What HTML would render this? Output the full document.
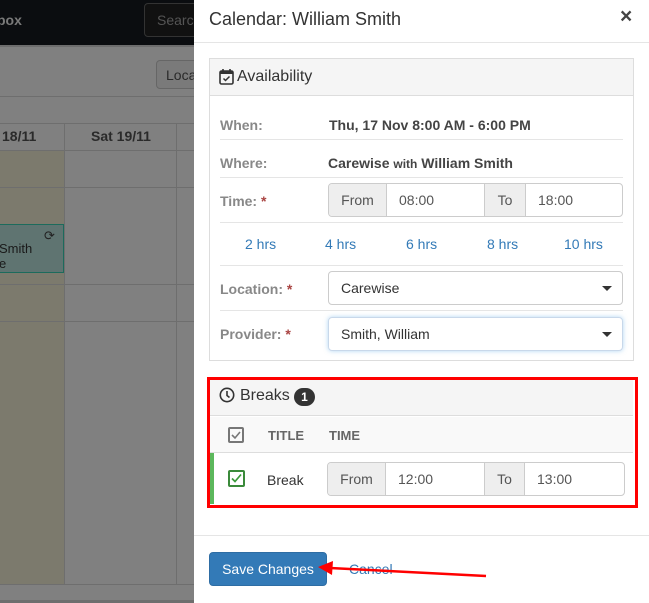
<!DOCTYPE html>
<html><head><meta charset="utf-8"><style>
*{box-sizing:border-box;margin:0;padding:0}
body{width:649px;height:603px;overflow:hidden;position:relative;font-family:"Liberation Sans",Arial,sans-serif;font-size:14px;color:#333;background:#808080}
.a{position:absolute}
.lbl{position:absolute;left:220px;font-weight:bold;color:#888;font-size:14px}
.lbl b{color:#a94442}
.hl{position:absolute;left:220px;width:403px;height:1px;background:#e5e5e5}
.ig{position:absolute;display:flex;border:1px solid #ccc;border-radius:4px;overflow:hidden;height:34px}
.ig div{display:flex;align-items:center;padding-left:12px;font-size:14px}
.ad{background:#eee;color:#555;border-right:1px solid #ccc;justify-content:center;padding-left:0!important}
.ip{border-right:1px solid #ccc;color:#555}
.sel{position:absolute;left:328px;width:295px;height:34px;border:1px solid #ccc;border-radius:4px;padding:8px 12px;font-size:14px;color:#333}
.sel:after{content:"";position:absolute;right:10px;top:14px;border:5px solid transparent;border-top:5px solid #333;border-bottom:0}
.hr{position:absolute;top:236px;color:#337ab7;font-size:14px}
</style></head><body>
<div class="a" style="left:0;top:0;width:194px;height:45px;background:#0b0d10"></div>
<div class="a" style="left:-3px;top:12px;color:#7a7a7a;font-weight:bold;font-size:14px">box</div>
<div class="a" style="left:144px;top:3px;width:60px;height:34px;border:1px solid #333;border-radius:4px;background:#111;color:#555;padding:8px 12px">Search</div>
<div class="a" style="left:0;top:45px;width:194px;height:2px;background:#6d6d6d"></div>
<div class="a" style="left:156px;top:60px;width:50px;height:29px;border:1px solid #666;border-radius:4px;background:#7a7a7a;color:#2a2a2a;padding:6px 9px">Loca</div>
<div class="a" style="left:0;top:96px;width:194px;height:1px;background:#6e6e6e"></div>
<div class="a" style="left:0;top:150px;width:64px;height:434px;background:#7c7a6d"></div>
<div class="a" style="left:0;top:123px;width:194px;height:1px;background:#6e6e6e"></div>
<div class="a" style="left:0;top:150px;width:194px;height:1px;background:#6e6e6e"></div>
<div class="a" style="left:0;top:187px;width:194px;height:1px;background:#6e6e6e"></div>
<div class="a" style="left:0;top:284px;width:194px;height:1px;background:#6e6e6e"></div>
<div class="a" style="left:0;top:321px;width:194px;height:1px;background:#6e6e6e"></div>
<div class="a" style="left:0;top:584px;width:194px;height:1px;background:#6e6e6e"></div>
<div class="a" style="left:0;top:600px;width:194px;height:3px;background:#6e6e6e"></div>
<div class="a" style="left:64px;top:123px;width:1px;height:461px;background:#6e6e6e"></div>
<div class="a" style="left:176px;top:123px;width:1px;height:461px;background:#6e6e6e"></div>
<div class="a" style="left:2px;top:128px;font-weight:bold;color:#2a2a2a">18/11</div>
<div class="a" style="left:91px;top:128px;font-weight:bold;color:#2a2a2a">Sat 19/11</div>
<div class="a" style="left:0;top:224px;width:64px;height:49px;background:#5f7471;border:1px solid #1c6b5c;border-left:0"></div>
<div class="a" style="left:-1px;top:241px;color:#1a1a1a;font-size:13px;line-height:15px">Smith<br>e</div>
<div class="a" style="left:44px;top:228px;color:#222;font-size:13px">⟳</div>
<div class="a" style="left:194px;top:0;width:455px;height:603px;background:#fff"></div>
<div class="a" style="left:209px;top:9px;font-size:18px;color:#333">Calendar: William Smith</div>
<div class="a" style="left:620px;top:5px;font-size:21px;font-weight:bold;color:#444">×</div>
<div class="a" style="left:194px;top:42px;width:455px;height:1px;background:#e5e5e5"></div>
<div class="a" style="left:209px;top:58px;width:425px;height:303px;border:1px solid #ddd"></div>
<div class="a" style="left:210px;top:59px;width:423px;height:37px;background:#f5f5f5;border-bottom:1px solid #ddd"></div>
<svg class="a" style="left:219px;top:68px" width="15" height="17" viewBox="0 0 15 17"><rect x="1" y="3" width="13" height="13" rx="1.5" fill="none" stroke="#333" stroke-width="1.6"/><rect x="1" y="3" width="13" height="3" fill="#333"/><line x1="4" y1="1" x2="4" y2="4" stroke="#333" stroke-width="1.6"/><line x1="11" y1="1" x2="11" y2="4" stroke="#333" stroke-width="1.6"/><path d="M4.5 10.5l2 2 4-4" fill="none" stroke="#333" stroke-width="1.5"/></svg>
<div class="a" style="left:237px;top:68px;font-size:16px">Availability</div>
<div class="lbl" style="top:117px">When:</div>
<div class="a" style="left:329px;top:117px;font-weight:bold;color:#444">Thu, 17 Nov 8:00 AM - 6:00 PM</div>
<div class="hl" style="top:139px"></div>
<div class="lbl" style="top:155px">Where:</div>
<div class="a" style="left:328px;top:155px;font-weight:bold;color:#444">Carewise <span style="font-size:12px">with</span> William Smith</div>
<div class="hl" style="top:177px"></div>
<div class="lbl" style="top:193px">Time: <b>*</b></div>
<div class="ig" style="left:328px;top:183px;width:295px"><div class="ad" style="width:58px">From</div><div class="ip" style="width:98px">08:00</div><div class="ad" style="width:41px">To</div><div style="flex:1;color:#555">18:00</div></div>
<div class="hl" style="top:222px"></div>
<div class="hr" style="left:245px">2 hrs</div><div class="hr" style="left:325px">4 hrs</div><div class="hr" style="left:406px">6 hrs</div><div class="hr" style="left:487px">8 hrs</div><div class="hr" style="left:564px">10 hrs</div>
<div class="hl" style="top:265px"></div>
<div class="lbl" style="top:281px">Location: <b>*</b></div>
<div class="sel" style="top:271px">Carewise</div>
<div class="hl" style="top:310px"></div>
<div class="lbl" style="top:326px">Provider: <b>*</b></div>
<div class="sel" style="top:317px;border-color:#c8d8ea;box-shadow:0 0 5px rgba(102,175,233,.5)">Smith, William</div>
<div class="a" style="left:207px;top:377px;width:431px;height:131px;border:3px solid #f00"></div>
<div class="a" style="left:210px;top:380px;width:423px;height:36px;background:#f5f5f5;border-bottom:1px solid #ddd"></div>
<svg class="a" style="left:219px;top:387px" width="16" height="16" viewBox="0 0 16 16"><circle cx="8" cy="8" r="6.7" fill="none" stroke="#333" stroke-width="1.6"/><path d="M8 4v4.5l2.5 2" fill="none" stroke="#333" stroke-width="1.6"/></svg>
<div class="a" style="left:240px;top:387px;font-size:16px">Breaks</div>
<div class="a" style="left:294px;top:388px;width:21px;height:18px;border-radius:9px;background:#333;color:#fff;font-size:12px;font-weight:bold;text-align:center;line-height:18px">1</div>
<div class="a" style="left:210px;top:417px;width:423px;height:36px;background:#f9f9f9;border-bottom:1px solid #ddd"></div>
<div class="a" style="left:228px;top:427px;width:16px;height:16px;border:2px solid #777;border-radius:2px"></div>
<svg class="a" style="left:231px;top:430px" width="10" height="10"><path d="M1 5l3 3 5-6" fill="none" stroke="#777" stroke-width="1.6"/></svg>
<div class="a" style="left:268px;top:428px;font-weight:bold;color:#666;font-size:13px">TITLE</div>
<div class="a" style="left:329px;top:428px;font-weight:bold;color:#666;font-size:13px">TIME</div>
<div class="a" style="left:210px;top:453px;width:4px;height:51px;background:#5cb85c"></div>
<div class="a" style="left:228px;top:470px;width:17px;height:17px;border:2px solid #3a8a3a;border-radius:2px"></div>
<svg class="a" style="left:231px;top:473px" width="11" height="11"><path d="M1 5.5l3 3 6-7" fill="none" stroke="#3a9a3a" stroke-width="1.7"/></svg>
<div class="a" style="left:267px;top:472px">Break</div>
<div class="ig" style="left:327px;top:462px;width:298px"><div class="ad" style="width:58px">From</div><div class="ip" style="width:99px">12:00</div><div class="ad" style="width:40px">To</div><div style="flex:1;color:#555">13:00</div></div>
<div class="a" style="left:194px;top:535px;width:455px;height:1px;background:#e5e5e5"></div>
<div class="a" style="left:209px;top:552px;width:118px;height:34px;background:#337ab7;border:1px solid #2e6da4;border-radius:4px;color:#fff;text-align:center;line-height:32px">Save Changes</div>
<div class="a" style="left:349px;top:561px;color:#337ab7">Cancel</div>
<svg class="a" style="left:0;top:0" width="649" height="603"><line x1="486" y1="576" x2="330" y2="568" stroke="#f00" stroke-width="2.5"/><polygon points="318,567 333,561 332,575" fill="#f00"/></svg>
</body></html>
